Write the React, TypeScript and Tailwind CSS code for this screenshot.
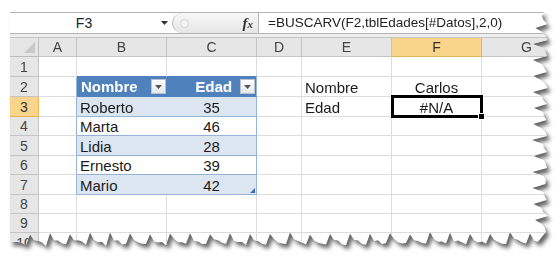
import React from "react";

const FONT = "font-['Liberation_Sans',Arial,sans-serif]";

// jagged "torn paper" outline for the right and bottom edges
function tornClip(W: number, H: number) {
  let s = 20231;
  const rnd = () => {
    s = (s * 16807) % 2147483647;
    return (s - 1) / 2147483646;
  };
  const pts: string[] = ["0px 0px", `${W - 4}px 0px`];
  for (let y = 4; y < H - 10; y += 4) {
    const k = Math.floor(y / 4) % 4;
    const x = k === 0 ? W - 16 + rnd() * 3 : W - 9 + k * 2 + rnd() * 3;
    pts.push(`${x.toFixed(1)}px ${y}px`);
  }
  for (let x = W - 10; x > 4; x -= 4) {
    const k = Math.floor(x / 4) % 5;
    const y = k === 0 ? H - 14 + rnd() * 3 : H - 9 + k * 1.5 + rnd() * 3;
    pts.push(`${x}px ${y.toFixed(1)}px`);
  }
  pts.push(`0px ${H - 4}px`);
  return `polygon(${pts.join(", ")})`;
}

const letters = ["A", "B", "C", "D", "E", "F", "G"];

type Cell = { text?: string; align?: "left" | "center" | "right" };

const data: Record<number, Record<number, Cell>> = {
  2: { 5: { text: "Nombre" }, 6: { text: "Carlos", align: "center" } },
  3: { 2: { text: "Roberto" }, 3: { text: "35", align: "center" }, 5: { text: "Edad" }, 6: { text: "#N/A", align: "center" } },
  4: { 2: { text: "Marta" }, 3: { text: "46", align: "center" } },
  5: { 2: { text: "Lidia" }, 3: { text: "28", align: "center" } },
  6: { 2: { text: "Ernesto" }, 3: { text: "39", align: "center" } },
  7: { 2: { text: "Mario" }, 3: { text: "42", align: "center" } },
};

function FilterButton() {
  return (
    <span className="flex h-[15px] w-[15px] items-center justify-center border border-[#b9c3cf] bg-gradient-to-b from-white to-[#e3e8ee]">
      <svg width="7" height="4" viewBox="0 0 7 4">
        <path d="M0 0h7L3.5 4z" fill="#555" />
      </svg>
    </span>
  );
}

function FormulaBar() {
  return (
    <div className="flex h-[22px] border-t border-b border-[#b4b4b4] bg-white text-[#222]">
      <div className="flex items-center">
        <span className="w-[148px] text-center text-[14px]">F3</span>
        <svg width="7" height="4" viewBox="0 0 7 4" className="ml-[3px]">
          <path d="M0 0h7L3.5 4z" fill="#333" />
        </svg>
      </div>
      <div className="ml-[4px] flex w-[86px] items-center justify-between rounded-l-full border-l border-[#b9b9b9] bg-gradient-to-b from-[#f7f7f7] to-[#e6e6e6] pl-[7px] pr-[5px]">
        <span className="h-[9px] w-[9px] rounded-full border border-[#d2d2d2] bg-[#f4f4f4]" />
        <span className="font-['Liberation_Serif',serif] text-[15px] font-bold italic text-[#333]">
          f<span className="text-[11px]">x</span>
        </span>
      </div>
      <div className="flex flex-1 items-center border-l border-[#b4b4b4] pl-[9px] text-[13.5px] whitespace-nowrap">
        =BUSCARV(F2,tblEdades[#Datos],2,0)
      </div>
    </div>
  );
}

function Grid() {
  const rows = [1, 2, 3, 4, 5, 6, 7, 8, 9, 10];
  return (
    <div className="grid grid-cols-[29px_38px_90px_90px_45px_90px_90px_90px] grid-rows-[19px_20px_20px_20px_19px_20px_19px_20px_19px_19px_20px] text-[15px] leading-[17px] text-[#1a1a1a]">
      {/* corner */}
      <div className="relative border-r border-b border-[#bdbdbd] bg-[#e6e6e6]">
        <svg width="11" height="11" viewBox="0 0 11 11" className="absolute right-[3px] bottom-[3px]">
          <path d="M11 0v11H0z" fill="#c9c9c9" />
        </svg>
      </div>
      {letters.map((l) => (
        <div
          key={l}
          className={
            l === "F"
              ? "flex items-end justify-center border-r border-b border-[#e4b550] bg-[#f8d58b] text-[14px] text-[#333]"
              : "flex items-end justify-center border-r border-b border-[#c4c4c4] bg-[#e6e6e6] text-[14px] text-[#444]"
          }
        >
          {l}
        </div>
      ))}
      {rows.map((r) => (
        <React.Fragment key={r}>
          <div
            className={
              r === 3
                ? "flex items-end justify-center border-r border-b border-[#e4b550] bg-[#f8d58b] text-[14px] text-[#333]"
                : "flex items-end justify-center border-r border-b border-[#c4c4c4] bg-[#e6e6e6] text-[14px] text-[#444]"
            }
          >
            {r}
          </div>
          {[1, 2, 3, 4, 5, 6, 7].map((c) => {
            const inTable = r >= 2 && r <= 7 && (c === 2 || c === 3);
            const cell = data[r]?.[c];
            if (r === 2 && inTable) {
              return (
                <div
                  key={c}
                  className={`flex items-center border-b border-[#4f81bd] bg-[#4f81bd] pr-[1px] ${c === 3 ? "border-r border-r-[#95b3d7]" : ""}`}
                >
                  <span className={`flex-1 pl-[4px] pr-[8px] font-bold text-white ${c === 3 ? "text-right" : ""}`}>
                    {c === 2 ? "Nombre" : "Edad"}
                  </span>
                  <FilterButton />
                </div>
              );
            }
            let cls = "relative flex items-end border-b px-[3px] whitespace-nowrap ";
            if (inTable) {
              const band = r % 2 === 1;
              cls += band ? "bg-[#dce6f1] " : "bg-white ";
              cls += "border-b-[#95b3d7] ";
              cls += c === 3 ? "border-r border-r-[#95b3d7] " : "";
            } else {
              cls += "border-r border-[#dadcdd] ";
              if (c === 1 && r >= 2 && r <= 7) cls += "border-r-[#95b3d7] ";
              if (r === 1 && (c === 2 || c === 3)) cls += "border-b-[#4f81bd] ";
            }
            if (cell?.align === "center") cls += "justify-center ";
            if (r === 3 && c === 6) cls += "z-10 ";
            return (
              <div key={c} className={cls}>
                {cell?.text}
                {r === 3 && c === 6 && (
                  <div className="absolute -left-[1px] -top-[2px] -right-[2px] -bottom-[2px] border-[3px] border-black">
                    <div className="absolute -right-[5px] -bottom-[5px] h-[7px] w-[7px] border border-white bg-black" />
                  </div>
                )}
                {r === 7 && c === 3 && (
                  <svg width="5" height="5" viewBox="0 0 5 5" className="absolute right-[1px] bottom-[1px]">
                    <path d="M5 0v5H0z" fill="#3a6cb0" />
                  </svg>
                )}
              </div>
            );
          })}
        </React.Fragment>
      ))}
    </div>
  );
}

export default function App() {
  const W = 538;
  const H = 234;
  return (
    <div className={`h-[266px] w-[560px] overflow-hidden bg-white pl-[10px] pt-[12px] ${FONT}`}>
      <div className="w-[538px] drop-shadow-[3px_4px_2px_rgba(0,0,0,0.6)]">
        <div className="h-[234px] w-[538px] overflow-hidden bg-white" style={{ clipPath: tornClip(W, H) }}>
          <FormulaBar />
          <div className="h-[4px] border-b border-[#c4c4c4] bg-[#eeeeee]" />
          <Grid />
        </div>
      </div>
    </div>
  );
}
